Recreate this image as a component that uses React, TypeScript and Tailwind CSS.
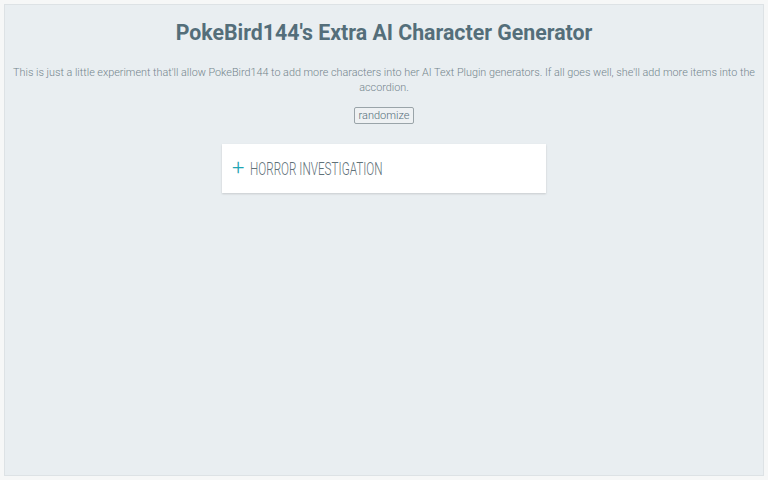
export default function App() {
  return (
    <div className="w-[768px] h-[480px] bg-[#f6f7f7] p-[4px]" style={{ fontFamily: 'Roboto, "Noto Sans", sans-serif' }}>
      <div className="h-[472px] w-[760px] bg-[#e9eef1] border border-[#dde2e5] flex flex-col items-center">
        <h1 className="mt-[13px] text-[21.3px] leading-[30px] font-bold text-[#546e7a]">PokeBird144's Extra AI Character Generator</h1>
        <p className="mt-[17px] px-[6px] text-[10.8px] leading-[15px] font-light text-[#74858d] text-center">
          This is just a little experiment that'll allow PokeBird144 to add more characters into her AI Text Plugin generators. If all goes well, she'll add more items into the accordion.
        </p>
        <button className="mt-[12px] h-[17px] px-[4px] border border-[#9aa4a9] bg-[#eef1f3] rounded-[2px] text-[11px] leading-[15px] font-light text-[#546e7a]">randomize</button>
        <div className="mt-[20px] w-[324px] h-[49px] bg-white shadow-[0_1px_2px_rgba(0,0,0,0.15)] flex items-center pl-[10px]">
          <span className="text-[#1fa5b3] text-[22px] leading-none font-light w-[18px] -mt-[2px]">+</span>
          <span className="text-[18px] font-light text-[#5f7178] inline-block origin-left scale-x-[0.65]">HORROR INVESTIGATION</span>
        </div>
      </div>
    </div>
  );
}
